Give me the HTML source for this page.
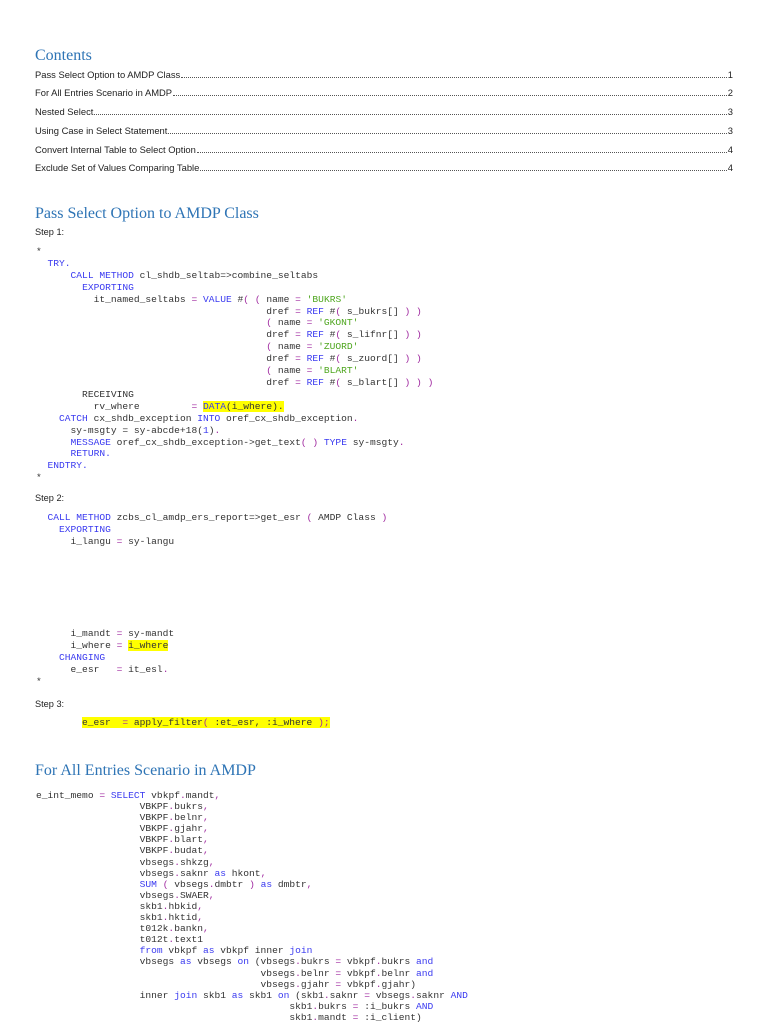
<!DOCTYPE html>
<html><head><meta charset="utf-8"><style>
body{margin:0;width:768px;height:1024px;background:#fff;position:relative;overflow:hidden;font-family:"Liberation Sans",sans-serif;}
.h{position:absolute;left:35px;font-family:"Liberation Serif",serif;color:#2e74b5;font-size:16px;line-height:18px;}
.toc{position:absolute;left:35px;width:698px;font-size:9.4px;line-height:11px;color:#222;display:flex;}
.toc .d{flex:1;border-bottom:1px dotted #555;margin:0 1px 2px 1px;}
.st{position:absolute;left:35px;font-size:9.2px;color:#222;line-height:11px;}
pre{position:absolute;margin:0;font-family:"Liberation Mono",monospace;font-size:9.6px;color:#333;}
.k{color:#3a3af0}.s{color:#4ea61e}.p{color:#a02aa0}.y{background:#ffff00}
</style></head><body>
<div class="h" style="top:47px">Contents</div>
<div class="toc" style="top:69px"><span>Pass Select Option to AMDP Class</span><span class="d"></span><span>1</span></div>
<div class="toc" style="top:87px"><span>For All Entries Scenario in AMDP</span><span class="d"></span><span>2</span></div>
<div class="toc" style="top:106px"><span>Nested Select</span><span class="d"></span><span>3</span></div>
<div class="toc" style="top:125px"><span>Using Case in Select Statement</span><span class="d"></span><span>3</span></div>
<div class="toc" style="top:144px"><span>Convert Internal Table to Select Option</span><span class="d"></span><span>4</span></div>
<div class="toc" style="top:162px"><span>Exclude Set of Values Comparing Table</span><span class="d"></span><span>4</span></div>

<div class="h" style="top:205px">Pass Select Option to AMDP Class</div>
<div class="st" style="top:227px">Step 1:</div>
<pre style="left:36px;top:246px;line-height:11.9px">*
  <span class="k">TRY.</span>
      <span class="k">CALL METHOD</span> cl_shdb_seltab=&gt;combine_seltabs
        <span class="k">EXPORTING</span>
          it_named_seltabs <span class="p">=</span> <span class="k">VALUE</span> #<span class="p">(</span> <span class="p">(</span> name <span class="p">=</span> <span class="s">'BUKRS'</span>
                                        dref <span class="p">=</span> <span class="k">REF</span> #<span class="p">(</span> s_bukrs[] <span class="p">)</span> <span class="p">)</span>
                                        <span class="p">(</span> name <span class="p">=</span> <span class="s">'GKONT'</span>
                                        dref <span class="p">=</span> <span class="k">REF</span> #<span class="p">(</span> s_lifnr[] <span class="p">)</span> <span class="p">)</span>
                                        <span class="p">(</span> name <span class="p">=</span> <span class="s">'ZUORD'</span>
                                        dref <span class="p">=</span> <span class="k">REF</span> #<span class="p">(</span> s_zuord[] <span class="p">)</span> <span class="p">)</span>
                                        <span class="p">(</span> name <span class="p">=</span> <span class="s">'BLART'</span>
                                        dref <span class="p">=</span> <span class="k">REF</span> #<span class="p">(</span> s_blart[] <span class="p">)</span> <span class="p">)</span> <span class="p">)</span>
        RECEIVING
          rv_where         <span class="p">=</span> <span class="y"><span class="k">DATA</span>(i_where).</span>
    <span class="k">CATCH</span> cx_shdb_exception <span class="k">INTO</span> oref_cx_shdb_exception<span class="p">.</span>
      sy-msgty = sy-abcde+18(<span class="k">1</span>)<span class="p">.</span>
      <span class="k">MESSAGE</span> oref_cx_shdb_exception-&gt;get_text<span class="p">(</span> <span class="p">)</span> <span class="k">TYPE</span> sy-msgty<span class="p">.</span>
      <span class="k">RETURN.</span>
  <span class="k">ENDTRY.</span>
*</pre>

<div class="st" style="top:493px">Step 2:</div>
<pre style="left:36px;top:512px;line-height:11.9px">  <span class="k">CALL METHOD</span> zcbs_cl_amdp_ers_report=&gt;get_esr <span class="p">(</span> AMDP Class <span class="p">)</span>
    <span class="k">EXPORTING</span>
      i_langu <span class="p">=</span> sy-langu</pre>
<pre style="left:36px;top:628px;line-height:11.9px">      i_mandt <span class="p">=</span> sy-mandt
      i_where <span class="p">=</span> <span class="y">i_where</span>
    <span class="k">CHANGING</span>
      e_esr   <span class="p">=</span> it_esl<span class="p">.</span>
*</pre>
<div class="st" style="top:699px">Step 3:</div>
<pre style="left:82px;top:717px;line-height:11.9px"><span class="y">e_esr  <span class="p">=</span> apply_filter<span class="p">(</span> :et_esr, :i_where <span class="p">);</span></span></pre>

<div class="h" style="top:762px">For All Entries Scenario in AMDP</div>
<pre style="left:36px;top:790px;line-height:11.1px">e_int_memo <span class="p">=</span> <span class="k">SELECT</span> vbkpf<span class="p">.</span>mandt<span class="p">,</span>
                  VBKPF<span class="p">.</span>bukrs<span class="p">,</span>
                  VBKPF<span class="p">.</span>belnr<span class="p">,</span>
                  VBKPF<span class="p">.</span>gjahr<span class="p">,</span>
                  VBKPF<span class="p">.</span>blart<span class="p">,</span>
                  VBKPF<span class="p">.</span>budat<span class="p">,</span>
                  vbsegs<span class="p">.</span>shkzg<span class="p">,</span>
                  vbsegs<span class="p">.</span>saknr <span class="k">as</span> hkont<span class="p">,</span>
                  <span class="k">SUM</span> <span class="p">(</span> vbsegs<span class="p">.</span>dmbtr <span class="p">)</span> <span class="k">as</span> dmbtr<span class="p">,</span>
                  vbsegs<span class="p">.</span>SWAER<span class="p">,</span>
                  skb1<span class="p">.</span>hbkid<span class="p">,</span>
                  skb1<span class="p">.</span>hktid<span class="p">,</span>
                  t012k<span class="p">.</span>bankn<span class="p">,</span>
                  t012t<span class="p">.</span>text1
                  <span class="k">from</span> vbkpf <span class="k">as</span> vbkpf inner <span class="k">join</span>
                  vbsegs <span class="k">as</span> vbsegs <span class="k">on</span> (vbsegs<span class="p">.</span>bukrs <span class="p">=</span> vbkpf<span class="p">.</span>bukrs <span class="k">and</span>
                                       vbsegs<span class="p">.</span>belnr <span class="p">=</span> vbkpf<span class="p">.</span>belnr <span class="k">and</span>
                                       vbsegs<span class="p">.</span>gjahr <span class="p">=</span> vbkpf<span class="p">.</span>gjahr)
                  inner <span class="k">join</span> skb1 <span class="k">as</span> skb1 <span class="k">on</span> (skb1<span class="p">.</span>saknr <span class="p">=</span> vbsegs<span class="p">.</span>saknr <span class="k">AND</span>
                                            skb1<span class="p">.</span>bukrs <span class="p">=</span> :i_bukrs <span class="k">AND</span>
                                            skb1<span class="p">.</span>mandt <span class="p">=</span> :i_client)</pre>
</body></html>
